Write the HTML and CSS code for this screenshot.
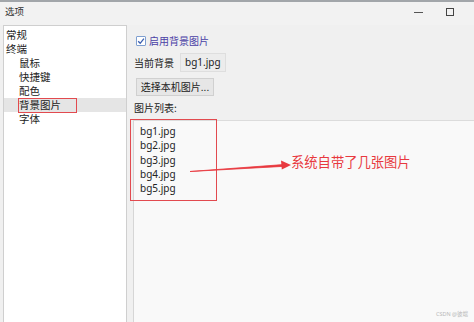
FILE: index.html
```html
<!DOCTYPE html>
<html>
<head>
<meta charset="utf-8">
<link rel="stylesheet" href="styles.css">
</head>
<body>
<div class="window">
  <div class="topbar"></div>
  <div class="titlebar">
    <span class="title">选项</span>
    <div class="controls">
      <span class="min"></span>
      <span class="max"></span>
    </div>
  </div>
  <div class="main">
    <div class="tree">
      <div class="item">常规</div>
      <div class="item">终端</div>
      <div class="item child">鼠标</div>
      <div class="item child">快捷键</div>
      <div class="item child">配色</div>
      <div class="item child selected">背景图片</div>
      <div class="item child">字体</div>
    </div>
    <div class="content">
      <label class="check">
        <span class="box"><svg width="10" height="10" viewBox="0 0 10 10"><path d="M2.2 5.2 L4.2 7.3 L7.9 2.6" fill="none" stroke="#3a5fb0" stroke-width="1.3"/></svg></span>
        <span class="check-text">启用背景图片</span>
      </label>
      <div class="row">
        <span class="row-label">当前背景</span>
        <span class="field">bg1.jpg</span>
      </div>
      <button class="btn">选择本机图片...</button>
      <div class="list-label">图片列表:</div>
      <div class="list">
        <div class="file">bg1.jpg</div>
        <div class="file">bg2.jpg</div>
        <div class="file">bg3.jpg</div>
        <div class="file">bg4.jpg</div>
        <div class="file">bg5.jpg</div>
      </div>
    </div>
  </div>

  <div class="mark mark-tree"></div>
  <div class="mark mark-list"></div>
  <svg class="arrow" width="474" height="322" viewBox="0 0 474 322">
    <path d="M190 171.5 L283 164.6 L283 166.4 Z" fill="#e8393f" stroke="#e8393f" stroke-width="0.8"/>
    <path d="M281 160.5 L291 165 L281.8 169.5 Z" fill="#e8393f"/>
  </svg>
  <div class="note">系统自带了几张图片</div>
  <div class="watermark">CSDN @彼端</div>
</div>
</body>
</html>
```

FILE: styles.css
```css
* { box-sizing: border-box; }
html, body { margin: 0; padding: 0; }
body {
  width: 474px;
  height: 322px;
  overflow: hidden;
  background: #f0f0f0;
  font-family: "Noto Sans CJK SC", "Noto Sans", sans-serif;
  color: #222;
}
.window {
  position: relative;
  width: 474px;
  height: 322px;
  display: flex;
  flex-direction: column;
  background: #f0f0f0;
}
.topbar {
  height: 2px;
  background: #a2a6aa;
  flex: none;
}
.titlebar {
  height: 23px;
  flex: none;
  display: flex;
  align-items: center;
  justify-content: space-between;
  background: #f2f2f2;
  padding-left: 5px;
}
.title {
  font-size: 9.5px;
  color: #333;
  line-height: 1;
  margin-top: -3px;
}
.controls {
  display: flex;
  align-items: center;
  gap: 23px;
  margin-right: 20px;
  margin-top: -3px;
}
.min {
  width: 9px;
  height: 1px;
  background: #555;
}
.max {
  width: 8px;
  height: 8px;
  border: 1px solid #444;
}
.main {
  flex: 1;
  display: flex;
  min-height: 0;
}
.tree {
  width: 124px;
  margin-left: 3px;
  background: #fff;
  border: 1px solid #cfcfcf;
  border-bottom: none;
  padding-top: 2px;
  flex: none;
}
.item {
  height: 14px;
  line-height: 14px;
  font-size: 10.5px;
  padding-left: 2px;
  color: #222;
}
.item.child { padding-left: 15px; }
.item.selected { background: #e5e5e5; }
.content {
  flex: 1;
  display: flex;
  flex-direction: column;
  align-items: flex-start;
  margin-left: 6px;
}
.check {
  display: flex;
  align-items: center;
  height: 12px;
  margin-top: 10px;
  margin-left: 3px;
}
.box {
  width: 10px;
  height: 10px;
  border: 1px solid #7f9fd0;
  background: #fff;
  display: flex;
  align-items: center;
  justify-content: center;
  border-radius: 1px;
}
.box svg { display: block; flex: none; }
.check-text {
  font-size: 10px;
  color: #4a3fa6;
  margin-left: 3px;
  line-height: 12px;
}
.row {
  display: flex;
  align-items: center;
  margin-top: 6px;
  margin-left: 1px;
}
.row-label {
  font-size: 10px;
  line-height: 12px;
}
.field {
  margin-left: 6px;
  height: 19px;
  width: 46px;
  background: #ececec;
  border: 1px solid #dedede;
  font-family: "Noto Sans", sans-serif;
  font-size: 10px;
  line-height: 17px;
  padding-left: 4px;
  color: #222;
}
.btn {
  margin-top: 6px;
  margin-left: 3px;
  height: 18px;
  width: 78px;
  padding: 0;
  background: #e6e6e6;
  border: 1px solid #d0d0d0;
  border-radius: 0;
  font-family: "Noto Sans CJK SC", "Noto Sans", sans-serif;
  font-size: 10px;
  line-height: 16px;
  color: #222;
}
.list-label {
  margin-top: 6px;
  margin-left: 1px;
  font-size: 10px;
  line-height: 12px;
  height: 12px;
}
.list {
  margin-top: 6px;
  align-self: stretch;
  flex: 1;
  background: #f9f9f9;
  border-top: 1px solid #dcdcdc;
  border-left: 1px solid #d6d6d6;
  padding-top: 3px;
  padding-left: 6px;
}
.file {
  font-family: "Noto Sans", sans-serif;
  font-size: 10px;
  line-height: 14.3px;
  height: 14.3px;
  color: #222;
}
.mark {
  position: absolute;
  border: 1.5px solid #e24a4f;
}
.mark-tree {
  left: 18px;
  top: 98px;
  width: 59px;
  height: 15px;
}
.mark-list {
  left: 130px;
  top: 119px;
  width: 87px;
  height: 82px;
}
.arrow {
  position: absolute;
  left: 0;
  top: 0;
  pointer-events: none;
}
.note {
  position: absolute;
  left: 291px;
  top: 153px;
  font-size: 13.3px;
  line-height: 18px;
  color: #e8393f;
  letter-spacing: 0;
}
.watermark {
  position: absolute;
  right: 6px;
  top: 310px;
  font-family: "Noto Sans", "Noto Sans CJK SC", sans-serif;
  font-size: 5.5px;
  color: #b8b8b8;
}
```
